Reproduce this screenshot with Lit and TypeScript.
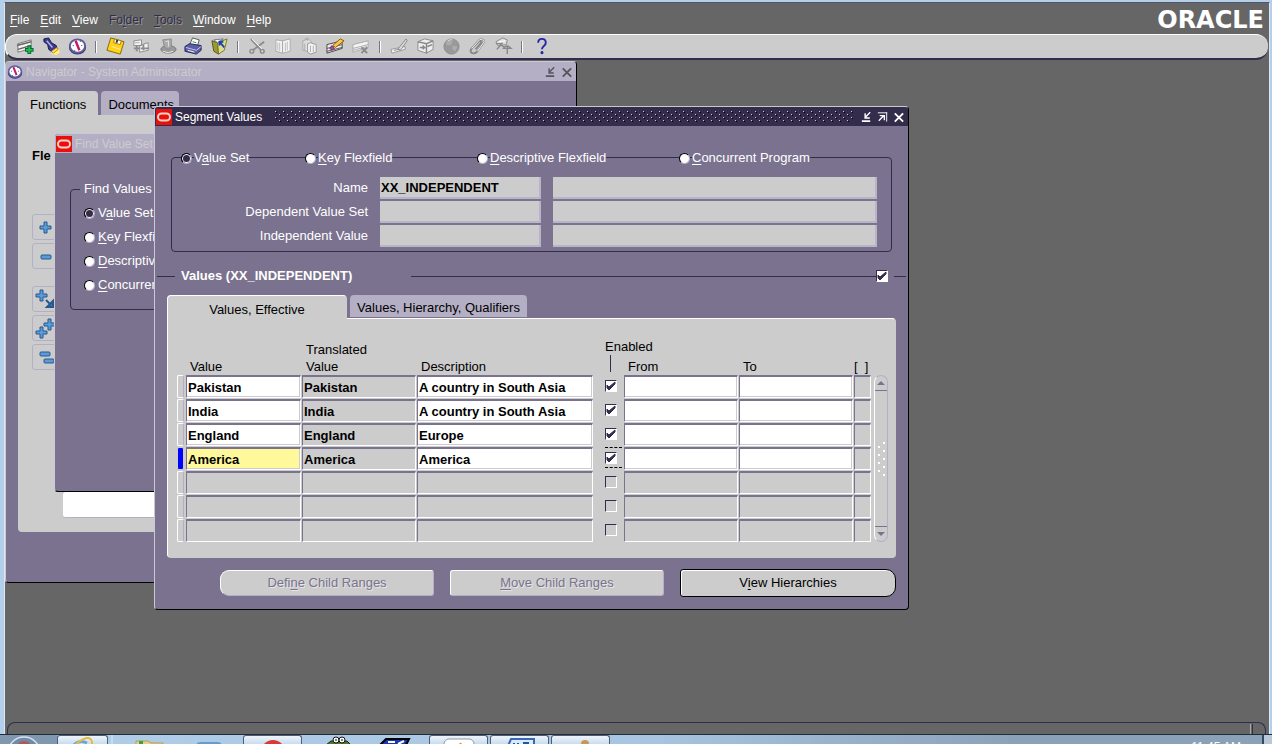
import { LitElement, html, svg, css, nothing } from "lit";
import { customElement, property } from "lit/decorators.js";
import { classMap } from "lit/directives/class-map.js";

const G = "#8c8c8c";
const W = "#f4f4f4";

const ruled = svg`<path d="M2 7l14-4v9L2 16z" fill="#f4f4f4" stroke="#777"/><path d="M1 9l15-4M2 13l14-4" stroke="#666" stroke-width="1.500"/>`;
const compass = svg`<ellipse cx="10" cy="11" rx="9" ry="7.500" fill="#2b2b78"/><ellipse cx="10" cy="9.500" rx="8" ry="7" fill="#fff" stroke="#5c5c9c" stroke-width="2"/><path d="M8 4l4 10" stroke="#c2186a" stroke-width="2.500"/><path d="M13 4v1M7 14v1M5 9h1M14 9h1" stroke="#333"/>`;

const ICONS: Record<string, unknown> = {
  new: svg`${ruled}<path d="M14 9v9M9.500 13.500h9" stroke="#064" stroke-width="4"/><path d="M14 10v7M10.500 13.500h7" stroke="#1fc43a" stroke-width="2"/>`,
  find: svg`<path d="M11 14l6-2 2 4-4 3-5-1z" fill="#ffee7a"/><path d="M2 2l5-1 3 5 5 3 1 4-5 3-4-3-1-5-4-3z" fill="#3a3a92" stroke="#17174f"/><path d="M5 4l6 7" stroke="#b5b5dd" stroke-width="1.500"/><path d="M10 15l6-4 1 2-5 4z" fill="#ffe95e" stroke="#c8881c"/>`,
  nav: compass,
  save: svg`<path d="M5 1l14 4-4 13-14-4z" fill="#ffd21c" stroke="#8a6500"/><path d="M9 2l7 2-1 4-7-2z" fill="#fff" stroke="#a97c00"/><path d="M6 10l9 3" stroke="#fff2a0"/><path d="M12 3l-1 3" stroke="#333" stroke-width="2"/>`,
  next: svg`<path d="M2 4l8-1v6H2zM8 9l9-3v8l-9 2z" fill="${W}" stroke="${G}"/><path d="M2 12h6M5 9v6M12 8v6M9 12h9" stroke="${G}" stroke-width="2"/><path d="M3 6h5" stroke="#aaa"/>`,
  submit: svg`<ellipse cx="11" cy="13" rx="8" ry="4" fill="#999" stroke="#777"/><path d="M5 3l9-1v9q-3 3-7 0z" fill="#aaa" stroke="${G}"/><path d="M8 5l3-1v6" fill="none" stroke="#e4e4e4"/><path d="M5 15q6 3 11 0" fill="none" stroke="#eee"/>`,
  print: svg`<path d="M6 8l3-7 7 2-2 7z" fill="#fff" stroke="#555"/><path d="M9 5l4 1" stroke="#1e9c38"/><path d="M1 10l5-3 12 2v5l-5 4-12-3z" fill="#5d5da3" stroke="#22225c"/><path d="M2 11l11 3 5-4" fill="none" stroke="#c9c9ef"/><path d="M4 14l7 2" stroke="#fff"/>`,
  close: svg`<path d="M2 4l6 2 1 12-5-3z" fill="#9b9b35" stroke="#55551a"/><path d="M8 6l10-4-3 12-6 4z" fill="#dede8a" stroke="#77772a"/><path d="M4 3l10-1-6 4z" fill="#fff" stroke="#777"/><path d="M10 5l5 6M10 9V5h4" stroke="#1d41b4" stroke-width="2" fill="none"/>`,
  cut: svg`<path d="M3 2l11 12M17 5L5 14" stroke="${G}" stroke-width="2"/><path d="M4 2l11 11" stroke="#fff"/><circle cx="4" cy="15" r="2" fill="none" stroke="${G}" stroke-width="1.500"/><circle cx="15" cy="15" r="2" fill="none" stroke="${G}" stroke-width="1.500"/>`,
  copy: svg`<path d="M2 3l7 1v13l-7-2zM9 4l8-2v13l-8 2z" fill="${W}" stroke="#aaa"/><path d="M4 6v8M6 6v9M12 6v9M14 5v9" stroke="#bbb"/>`,
  paste: svg`<path d="M3 4l6-2 3 3v11l-9-2z" fill="#ddd" stroke="#aaa"/><path d="M8 7l3-1 6 2v8l-6 2-3-2z" fill="${W}" stroke="#999"/><path d="M11 9v7M14 9v7M5 2l3-1v3M5 7v7" stroke="#aaa"/>`,
  clear: svg`<path d="M1 8l16-4v8L1 17z" fill="#eee" stroke="#444"/><path d="M1 12l16-4M1 15l16-4" stroke="#555"/><path d="M7 9l8-7 4 2-9 7z" fill="#f7c64a" stroke="#8a5a00"/><path d="M6 9l3 3-3 2-2-2z" fill="#d33a6a" stroke="#44a"/>`,
  del: svg`<path d="M1 8l16-4v7L1 16z" fill="${W}" stroke="#aaa"/><path d="M1 12l16-4M1 14l15-4" stroke="#aaa"/><path d="M10 11l6 6M16 11l-6 6" stroke="#888" stroke-width="2"/>`,
  edit: svg`<path d="M1 13l15-3v3L2 17z" fill="${W}" stroke="#999"/><path d="M8 13l9-11 1 2-7 10z" fill="#ddd" stroke="#888"/><path d="M4 14l6-1" stroke="#888"/>`,
  zoom: svg`<path d="M2 5l7-3 9 2v9l-7 4-9-3z" fill="#eee" stroke="${G}"/><path d="M2 5l9 2 7-3M11 7v10M12 10l5-2M4 11h5l-2-2M9 11l-2 2" fill="none" stroke="#888" stroke-width="1.500"/>`,
  translate: svg`<circle cx="10" cy="10" r="8" fill="#999" stroke="#8c8c8c"/><path d="M4 6q3-4 7-2l-1 4-4 1zM11 9l5 1-2 5-3-2z" fill="#adadad"/><path d="M6 4q3-2 5-1" stroke="#ddd" fill="none"/>`,
  attach: svg`<path d="M4 12l8-9q4-2 5 2l-7 10q-4 4-7 1-1-3 2-5l7-7q3 0 2 2l-6 7" fill="none" stroke="#888" stroke-width="2"/><path d="M4 12l8-9q4-2 5 2l-7 10" fill="none" stroke="#f4f4f4" stroke-width="1"/>`,
  tools: svg`<path d="M2 5l7-4 5 2-1 5-9 1z" fill="#ddd" stroke="${G}"/><path d="M3 13l6-7M7 8l4 3M10 12q3-5 8 0zM14 10v8M2 7h6" fill="none" stroke="#888" stroke-width="1.500"/><path d="M5 5l7-1" stroke="#fff"/>`,
  help: svg`<path d="M6.500 6q0-4 4-4t4 4q0 2-2 3.500t-2 3.500" fill="none" stroke="#2525a8" stroke-width="2"/><path d="M9.500 15.500h2v2h-2z" fill="#2525a8" stroke="#2525a8"/>`,
};

const TOOLBAR: [string, string, boolean][][] = [
  [["new", "New", true], ["find", "Find", true], ["nav", "Show Navigator", true]],
  [["save", "Save", true], ["next", "Next Step", false], ["submit", "Switch Responsibility", false], ["print", "Print", true], ["close", "Close Form", true]],
  [["cut", "Cut", false], ["copy", "Copy", false], ["paste", "Paste", false], ["clear", "Clear Record", true], ["del", "Delete Record", false]],
  [["edit", "Edit Field", false], ["zoom", "Zoom", false], ["translate", "Translations", false], ["attach", "Attachments", false], ["tools", "Folder Tools", false]],
  [["help", "Help", true]],
];

const MENU: [string, string, string, boolean][] = [
  ["", "F", "ile", true], ["", "E", "dit", true], ["", "V", "iew", true],
  ["Fo", "l", "der", false], ["", "T", "ools", false],
  ["", "W", "indow", true], ["", "H", "elp", true],
];

const MODES: [string, string, string][] = [
  ["V", "a", "lue Set"], ["", "K", "ey Flexfield"], ["", "D", "escriptive Flexfield"], ["", "C", "oncurrent Program"],
];

interface Row { value: string; translated: string; description: string; on: boolean; current?: boolean }
const ROWS: Row[] = [
  { value: "Pakistan", translated: "Pakistan", description: "A country in South Asia", on: true },
  { value: "India", translated: "India", description: "A country in South Asia", on: true },
  { value: "England", translated: "England", description: "Europe", on: true },
  { value: "America", translated: "America", description: "America", on: true, current: true },
  { value: "", translated: "", description: "", on: false },
  { value: "", translated: "", description: "", on: false },
  { value: "", translated: "", description: "", on: false },
];

const shared = css`
  * { box-sizing: border-box; }
  button, input { font: inherit; color: inherit; margin: 0; padding: 0; border: 0; border-radius: 0; background: none; }
  u { text-decoration: underline; text-underline-offset: 2px; }
  input[type="radio"] {
    appearance: none; flex: none; width: 11px; height: 11px; border-radius: 50%;
    background: #fff; border: 1px solid #000; border-right-color: #b5b0c6; border-bottom-color: #b5b0c6;
  }
  input[type="radio"]:checked { background: #332d4b; box-shadow: inset 0 0 0 1px #fff; }
  input[type="checkbox"] {
    appearance: none; flex: none; display: block; width: 12px; height: 12px; background: #fff center / 10px 10px no-repeat;
    border: 1px solid #332d4b; border-right-color: #fff; border-bottom-color: #fff;
  }
  input[type="checkbox"]:checked {
    background-image: url("data:image/svg+xml,%3Csvg xmlns='http://www.w3.org/2000/svg' viewBox='0 0 10 10'%3E%3Cpath d='M1 4v3l2 2 6-6V1L3 6z' fill='%23332d4b' stroke='%23332d4b'/%3E%3C/svg%3E");
  }
  input[type="checkbox"]:disabled { background-color: #ccc; }
`;

const oracleMark = html`<svg class="mark" viewBox="0 0 16 16" aria-hidden="true">
  <rect width="16" height="16" fill="#e8100c"/><rect x="2" y="4.500" width="12" height="7" rx="3.500" fill="none" stroke="#ffd0c8" stroke-width="2"/></svg>`;

@customElement("forms-window")
class FormsWindow extends LitElement {
  @property() heading = "";
  @property({ type: Boolean, reflect: true }) active = false;
  @property() glyph = "oracle";
  @property({ type: Boolean }) sizable = false;

  static styles = [shared, css`
    :host {
      display: flex; flex-direction: column; background: #7a728e; font-size: 13px; color: #fff;
      border: 1px solid #ccc9d6; border-right-color: #000; border-bottom-color: #000; border-radius: 4px; overflow: hidden;
    }
    header { display: flex; align-items: center; gap: 3px; height: 19px; flex: none; padding: 0 3px 0 1px; background: #b4afc5; color: #ccc; font-size: 12px; }
    :host([active]) header { background: #332d4b; color: #fff; }
    h2 { margin: 0; font-size: 12px; font-weight: 400; white-space: nowrap; }
    .mark { width: 16px; height: 16px; flex: none; }
    .grip { flex: 1; height: 12px; margin: 0 4px 0 10px; }
    .grow { flex: 1; }
    .ctl { width: 13px; height: 16px; display: block; color: #57535f; }
    :host([active]) .ctl { color: #fff; }
    .ctl svg { display: block; width: 13px; height: 16px; fill: none; stroke: currentColor; stroke-width: 2; }
  `];

  render() {
    return html`
      <header>
        ${this.glyph === "oracle" ? oracleMark : html`<svg class="mark" viewBox="0 0 20 20" aria-hidden="true">${compass}</svg>`}
        <h2>${this.heading}</h2>
        ${this.active
          ? html`<svg class="grip" aria-hidden="true"><defs><pattern id="dots" width="8" height="6" patternUnits="userSpaceOnUse">
              <path d="M1 1h1v1H1zM5 4h1v1H5z" fill="#000"/><path d="M0 0h1v1H0zM4 3h1v1H4z" fill="#c8c4d8"/></pattern></defs>
              <rect width="100%" height="12" fill="url(#dots)"/></svg>`
          : html`<span class="grow"></span>`}
        <button class="ctl" aria-label="Minimize"><svg viewBox="0 0 14 16"><path d="M2 12.500h9" /><path d="M11 3L6 8M5.500 4v5h5" stroke-width="1.500"/></svg></button>
        ${this.sizable ? html`<button class="ctl" aria-label="Maximize"><svg viewBox="0 0 14 16"><path d="M2 3.500h10M11.500 3v10" stroke-width="1"/><path d="M3 12l5-5M4 6.500h5v5" stroke-width="1.500"/></svg></button>` : nothing}
        <button class="ctl" aria-label="Close"><svg viewBox="0 0 14 16"><path d="M3 4l9 9M12 4l-9 9"/></svg></button>
      </header>
      <slot></slot>`;
  }
}

@customElement("app-root")
class AppRoot extends LitElement {
  static styles = [shared, css`
    :host {
      display: flex; flex-direction: column; height: 100vh; overflow: hidden;
      font-family: "Liberation Sans", Arial, sans-serif; font-size: 13px; line-height: 16px; color: #000;
      background: #b3cfea;
    }
    .client { flex: 1; min-height: 0; display: flex; flex-direction: column; margin: 2px 2px 0 4px; border: 1px solid #dbe8f5; border-top-color: #556; border-bottom: 0; background: #666; }
    .top { display: flex; justify-content: space-between; align-items: center; height: 31px; flex: none; padding: 2px 5px 0; }
    nav { display: flex; gap: 11px; color: #fff; font-size: 12px; }
    nav button:disabled { color: #332d4b; text-shadow: 1px 1px #969696; }
    .brand { font: bold 24px/24px "DejaVu Sans", sans-serif; color: #fff; }
    .toolbar { display: flex; align-items: center; height: 26px; flex: none; padding: 0 6px; margin-right: 1px; background: #ccc; border-top: 1px solid #fff; border-left: 1px solid #fff; border-bottom: 2px solid #332d4b; border-radius: 12px; }
    .toolbar button { width: 26px; height: 22px; display: grid; place-items: center; }
    .toolbar svg { width: 19px; height: 19px; fill: none; }
    .sep { width: 2px; height: 12px; margin: 0 5px; background: #7a728e; border-right: 1px solid #fff; }
    .desktop { flex: 1; min-height: 0; position: relative; }
    .status { height: 12px; flex: none; margin: 0 3px 0 2px; border: 1px solid #332d4b; border-bottom: 0; border-radius: 8px 8px 0 0; display: flex; justify-content: flex-end; padding: 1px 12px 0; }
    .status span { width: 3px; border-left: 1px solid #aaa; border-right: 1px solid #332d4b; }

    forms-window { position: absolute; }
    .w-nav { left: 0; top: 1px; width: 572px; height: 522px; }
    .w-find { left: 49px; top: 73px; width: 500px; height: 359px; }
    .w-main { left: 149px; top: 46px; width: 755px; }

    .nav-body { flex: 1; display: flex; flex-direction: column; padding: 10px 12px 50px; color: #000; }
    .tabs { display: flex; gap: 3px; }
    .nav-body .tabs button { height: 24px; padding: 3px 5px 0 7px; background: #b4afc5; border-radius: 4px 4px 0 0; }
    .nav-body .tabs button.on { padding: 3px 12px 0; background: #ccc; }
    .nav-panel { flex: 1; background: #ccc; border-radius: 0 4px 4px 4px; padding: 33px 14px 14px; display: flex; flex-direction: column; }
    .nav-panel strong { display: block; margin-bottom: 50px; }
    .pads { display: grid; gap: 3px; justify-items: start; }
    .pads button { width: 28px; height: 26px; border: 1px solid #b4afc5; border-radius: 3px; }
    .pads button:nth-child(3) { margin-top: 14px; }
    .pads svg { display: block; width: 26px; height: 24px; }
    .path { display: block; margin: auto 0 0 31px; width: 460px; height: 26px; background: #fff; border-bottom: 1px solid #b4afc5; border-radius: 3px; }

    .find-body { min-width: 0; margin: 28px 30px 0 15px; padding: 4px 0 0 13px; height: 129px; border: 1px solid #332d4b; border-radius: 4px; }
    .find-body legend { padding: 0 4px; margin-left: -4px; }
    .find-body label { display: flex; align-items: center; gap: 3px; height: 24px; }

    .main-body { padding: 22px 12px 12px; }
    .criteria { position: relative; margin: 9px 4px 0; border: 1px solid #332d4b; border-radius: 4px; padding: 0 14px 4px 0; }
    .modes { display: grid; grid-template-columns: 124px 172px 202px auto; justify-content: start; margin-top: -8px; padding-left: 9px; height: 16px; }
    .modes label { display: flex; align-items: center; gap: 2px; width: max-content; }
    .modes span { background: #7a728e; }
    .fields { display: grid; grid-template-columns: 196px 161px 1fr; column-gap: 12px; row-gap: 2px; align-items: center; margin-top: 11px; }
    .fields label { text-align: right; }
    .fields input { width: 100%; min-width: 0; height: 22px; padding-left: 1px; background: #ccc; color: #000; font-weight: 700; border-right: 2px solid #b9b5c8; border-bottom: 2px solid #b9b5c8; }

    .section { display: flex; align-items: center; height: 16px; margin: 16px -10px 0; }
    .section i { height: 1px; background: #332d4b; }
    .section i:nth-of-type(1) { width: 18px; }
    .section strong { width: 236px; padding: 0 6px; }
    .section i:nth-of-type(2) { flex: 1; }
    .section i:nth-of-type(3) { width: 12px; margin-left: 6px; }

    .book { margin-top: 11px; color: #000; }
    .book .tabs { align-items: flex-start; }
    .book .tabs button { height: 22px; width: 177px; background: #b4afc5; border-radius: 4px 4px 0 0; padding-top: 4px; }
    .book .tabs button.on { position: relative; height: 24px; width: 180px; margin-bottom: -1px; background: #ccc; border: 1px solid #fff; border-bottom: 0; border-right-color: #ccc; }
    .sheet { display: flex; gap: 2px; align-items: flex-end; background: #ccc; border: 1px solid #fff; border-right-color: #ccc; border-bottom-color: #ccc; border-radius: 0 4px 4px 4px; padding: 19px 7px 14px 9px; }
    table { flex: 1; width: 100%; min-width: 0; table-layout: fixed; border-collapse: collapse; }
    th { font-weight: 400; text-align: left; vertical-align: bottom; padding: 0 0 0 4px; line-height: 17px; height: 37px; white-space: pre; }
    th.en { padding: 0; vertical-align: top; }
    th.en span { display: block; margin: 0 -20px 0 11px; }
    th.en i { display: block; width: 1px; height: 17px; margin-left: 16px; background: #332d4b; }
    th.mk { padding-left: 0; }
    td { padding: 0 1px 1px 0; height: 24px; }
    td input[type="text"] { display: block; width: 100%; height: 23px; padding-left: 1px; font-weight: 700; background: #ccc; border: 1px solid #fff; border-top: 2px solid #7a728e; border-left-color: #7a728e; border-radius: 1px; outline: 0; box-shadow: inset -1px -1px #ccc; }
    td input.open { background: #fff; }
    td input.cur { background: #fff99c; }
    td.rec { padding: 0 2px 1px 0; }
    .rec div { height: 23px; border: 1px solid #b4afc5; border-left-color: #fff; border-top-color: #fff; border-bottom-color: #fff; border-radius: 2px; }
    .rec .here { background: #00f; border-color: #ccc; }
    .tick { width: 17px; height: 21px; margin: 0 0 2px 11px; padding-top: 5px; }
    .tick.focus { border-top: 1px dashed #000; border-bottom: 1px dashed #000; padding-top: 4px; }
    .scroll { width: 14px; height: 167px; flex: none; display: grid; grid-template-rows: 14px 1fr 14px; margin-bottom: 1px; border: 1px solid #b4afc5; border-left-color: #fff; border-radius: 7px; }
    .scroll button { display: grid; place-items: center; }
    .scroll button svg { width: 8px; height: 4px; fill: #7a728e; }
    .thumb { display: grid; place-items: center; border-top: 1px solid #7a728e; border-bottom: 1px solid #7a728e; }
    .thumb svg { width: 10px; height: 36px; }

    .actions { display: grid; grid-template-columns: 214px 214px 216px; column-gap: 16px; justify-content: end; align-items: center; margin-top: 11px; color: #000; }
    .actions button { height: 26px; background: #ccc; border: 1px solid #fff; border-right-color: #b4afc5; border-bottom-color: #b4afc5; border-radius: 3px; }
    .actions button:disabled { color: #7a728e; text-shadow: 1px 1px #e6e6e6; }
    .actions button:first-child { border-radius: 9px 3px 3px 9px; }
    .actions button:last-child { height: 28px; border: 1px solid #000; box-shadow: inset 1px 1px #fff; border-radius: 3px 10px 10px 3px; }

    .taskbar { display: flex; height: 10px; flex: none; overflow: hidden; border-top: 1px solid #222c38; background: linear-gradient(90deg, #8097b0 0, #8097b0 57px, #b0cde8 58px, #a8c6e2 50%, #8ba1b8 80%); }
    .taskbar svg { display: block; height: 10px; flex: none; }
    .task { width: 59px; margin-right: 2px; flex: none; border: 1px solid #4d6073; border-bottom: 0; border-radius: 3px 3px 0 0; background: linear-gradient(#eef5fb, #c9dcee); display: grid; justify-items: center; overflow: hidden; }
    .task.first { width: 51px; }
    .clock { margin-left: auto; padding: 4px 21px 0 0; font-size: 12px; color: #fff; white-space: nowrap; }
    .peek { width: 10px; flex: none; border-left: 2px solid #34495e; background: #b9c8d8; }
  `];

  private modes(group: string) {
    return MODES.map(([a, k, b], i) => html`
      <label><input type="radio" name=${group} ?checked=${i === 0}><span>${a}<u>${k}</u>${b}</span></label>`);
  }

  private pad(name: string, art: unknown) {
    return html`<button aria-label=${name}><svg viewBox="0 0 26 24" aria-hidden="true">${art}</svg></button>`;
  }

  private plus(x: number, y: number) {
    return svg`<path transform="translate(${x} ${y})" d="M-2-5h3v4h4v3H1v4h-3V2h-4v-3h4z" fill="#5b9bd8" stroke="#27598f"/>`;
  }

  private minus(x: number, y: number) {
    return svg`<rect x=${x - 5} y=${y - 2} width="10" height="4" rx="1" fill="#5b9bd8" stroke="#27598f"/>`;
  }

  private row(r: Row, i: number) {
    const open = classMap({ open: r.on });
    const n = i + 1;
    return html`<tr>
      <td class="rec"><div class=${classMap({ here: !!r.current })}></div></td>
      <td><input type="text" class=${classMap({ open: r.on, cur: !!r.current })} aria-label="Value ${n}" .value=${r.value}></td>
      <td><input type="text" aria-label="Translated Value ${n}" readonly .value=${r.translated}></td>
      <td><input type="text" class=${open} aria-label="Description ${n}" .value=${r.description}></td>
      <td><div class=${classMap({ tick: true, focus: !!r.current })}><input type="checkbox" aria-label="Enabled ${n}" ?checked=${r.on} ?disabled=${!r.on}></div></td>
      <td><input type="text" class=${open} aria-label="From ${n}"></td>
      <td><input type="text" class=${open} aria-label="To ${n}"></td>
      <td><input type="text" aria-label="Flexfield ${n}"></td>
    </tr>`;
  }

  render() {
    return html`
      <div class="client">
        <div class="top">
          <nav>${MENU.map(([a, k, b, on]) => html`<button ?disabled=${!on}>${a}<u>${k}</u>${b}</button>`)}</nav>
          <div class="brand">ORACLE</div>
        </div>
        <div class="toolbar" role="toolbar">
          ${TOOLBAR.map((set, i) => html`${i ? html`<span class="sep"></span>` : nothing}${set.map(([id, label, on]) => html`
            <button aria-label=${label} ?disabled=${!on}><svg viewBox="0 0 20 20" aria-hidden="true">${ICONS[id]}</svg></button>`)}`)}
        </div>

        <main class="desktop">
          <forms-window class="w-nav" heading="Navigator - System Administrator" glyph="compass">
            <div class="nav-body">
              <div class="tabs"><button class="on">Functions</button><button>Documents</button></div>
              <div class="nav-panel">
                <strong>Fle</strong>
                <div class="pads">
                  ${this.pad("Expand", this.plus(13, 12))}
                  ${this.pad("Collapse", this.minus(13, 13))}
                  ${this.pad("Expand branch", svg`${this.plus(9, 8)}<path d="M13 13l5 5M20 14v6h-6z" stroke="#27598f" stroke-width="2" fill="#3f7cba"/>`)}
                  ${this.pad("Expand all", svg`${this.plus(9, 16)}${this.plus(17, 8)}`)}
                  ${this.pad("Collapse all", svg`${this.minus(12, 9)}${this.minus(16, 16)}`)}
                </div>
                <input class="path" type="text" aria-label="Top ten list">
              </div>
            </div>
          </forms-window>

          <forms-window class="w-find" heading="Find Value Set">
            <fieldset class="find-body"><legend>Find Values</legend>${this.modes("find")}</fieldset>
          </forms-window>

          <forms-window class="w-main" heading="Segment Values" active sizable>
            <div class="main-body">
              <div class="criteria">
                <div class="modes" role="radiogroup" aria-label="Find values by">${this.modes("main")}</div>
                <div class="fields">
                  <label for="name">Name</label><input id="name" type="text" readonly .value=${"XX_INDEPENDENT"}><input type="text" readonly aria-label="Name description">
                  <label for="dep">Dependent Value Set</label><input id="dep" type="text" readonly><input type="text" readonly aria-label="Dependent value set description">
                  <label for="ind">Independent Value</label><input id="ind" type="text" readonly><input type="text" readonly aria-label="Independent value description">
                </div>
              </div>
              <div class="section"><i></i><strong>Values (XX_INDEPENDENT)</strong><i></i><input type="checkbox" checked aria-label="Show values"><i></i></div>
              <div class="book">
                <div class="tabs"><button class="on">Values, Effective</button><button>Values, Hierarchy, Qualifiers</button></div>
                <div class="sheet">
                  <table>
                    <colgroup><col style="width:9px"><col style="width:116px"><col style="width:115px"><col style="width:177px"><col style="width:30px"><col style="width:115px"><col style="width:115px"><col style="width:18px"></colgroup>
                    <thead><tr><th></th><th>Value</th><th>Translated<br>Value</th><th>Description</th><th class="en"><span>Enabled</span><i></i></th><th>From</th><th>To</th><th class="mk">[  ]</th></tr></thead>
                    <tbody>${ROWS.map((r, i) => this.row(r, i))}</tbody>
                  </table>
                  <div class="scroll">
                    <button aria-label="Scroll up"><svg viewBox="0 0 8 4"><path d="M0 4l4-4 4 4z"/></svg></button>
                    <div class="thumb"><svg viewBox="0 0 10 36" fill="#fff"><path d="M7 1h2v2H7zM2 5h2v2H2zM7 9h2v2H7zM2 13h2v2H2zM7 17h2v2H7zM2 21h2v2H2zM7 25h2v2H7zM2 29h2v2H2zM7 33h2v2H7z"/></svg></div>
                    <button aria-label="Scroll down"><svg viewBox="0 0 8 4"><path d="M0 0l4 4 4-4z"/></svg></button>
                  </div>
                </div>
              </div>
              <div class="actions">
                <button disabled>Defi<u>n</u>e Child Ranges</button>
                <button disabled><u>M</u>ove Child Ranges</button>
                <button>V<u>i</u>ew Hierarchies</button>
              </div>
            </div>
          </forms-window>
        </main>
        <div class="status"><span></span></div>
      </div>

      <footer class="taskbar">
        <svg width="57" viewBox="0 0 57 10"><circle cx="24" cy="18" r="16" fill="#6f8ba6" stroke="#d5e4f2" stroke-width="1.500"/><circle cx="24" cy="14" r="8" fill="#a85c5c"/></svg>
        <span class="task first"><svg width="30" viewBox="0 0 30 10"><path d="M5 10q6-7 14-3" fill="none" stroke="#6fa4d8" stroke-width="3"/><path d="M8 8q14-11 16-2v4" fill="none" stroke="#e6bd3a" stroke-width="2"/></svg></span>
        <svg width="133" viewBox="0 0 133 10"><path d="M2 0v10" stroke="#dcebf8"/><path d="M26 10V6h12l3 2h12v2z" fill="#e5d289" stroke="#b99d4c"/><path d="M29 6h4v4h-4z" fill="#3da04b"/><path d="M86 10q1-3 4-3h18q3 0 4 3z" fill="#6a9bc8"/></svg>
        <span class="task"><svg width="40" viewBox="0 0 40 10"><circle cx="20" cy="16" r="12" fill="#d83a34"/></svg></span>
        <svg width="125" viewBox="0 0 125 10"><path d="M22 10l5-4h16l4 4z" fill="#4d7c24" stroke="#122"/><circle cx="32" cy="5" r="3" fill="#fff" stroke="#111"/><circle cx="38" cy="5" r="3" fill="#fff" stroke="#111"/><path d="M32 4v2M38 4v2" stroke="#000"/><path d="M76 10l6-6h23l-3 6z" fill="#1638b8" stroke="#000" stroke-width="2"/><path d="M84 7h7M94 9l6-3" stroke="#fff" stroke-width="2"/></svg>
        <span class="task"><svg width="34" viewBox="0 0 34 10"><rect x="2" y="3" width="30" height="20" rx="5" fill="#fff" stroke="#8b9aac"/><path d="M17 10l2-3" stroke="#e08a3c" stroke-width="2"/></svg></span>
        <span class="task"><svg width="34" viewBox="0 0 34 10"><path d="M5 10l3-7h23v7z" fill="#dce9fa" stroke="#3568b2" stroke-width="2"/><path d="M11 7v3M15 7v3M20 7h6" stroke="#2456a8" stroke-width="2"/></svg></span>
        <span class="task"><svg width="34" viewBox="0 0 34 10"><circle cx="21" cy="8" r="4" fill="#c99658"/></svg></span>
        <span class="clock">11:45 AM</span>
        <span class="peek"></span>
      </footer>`;
  }
}
